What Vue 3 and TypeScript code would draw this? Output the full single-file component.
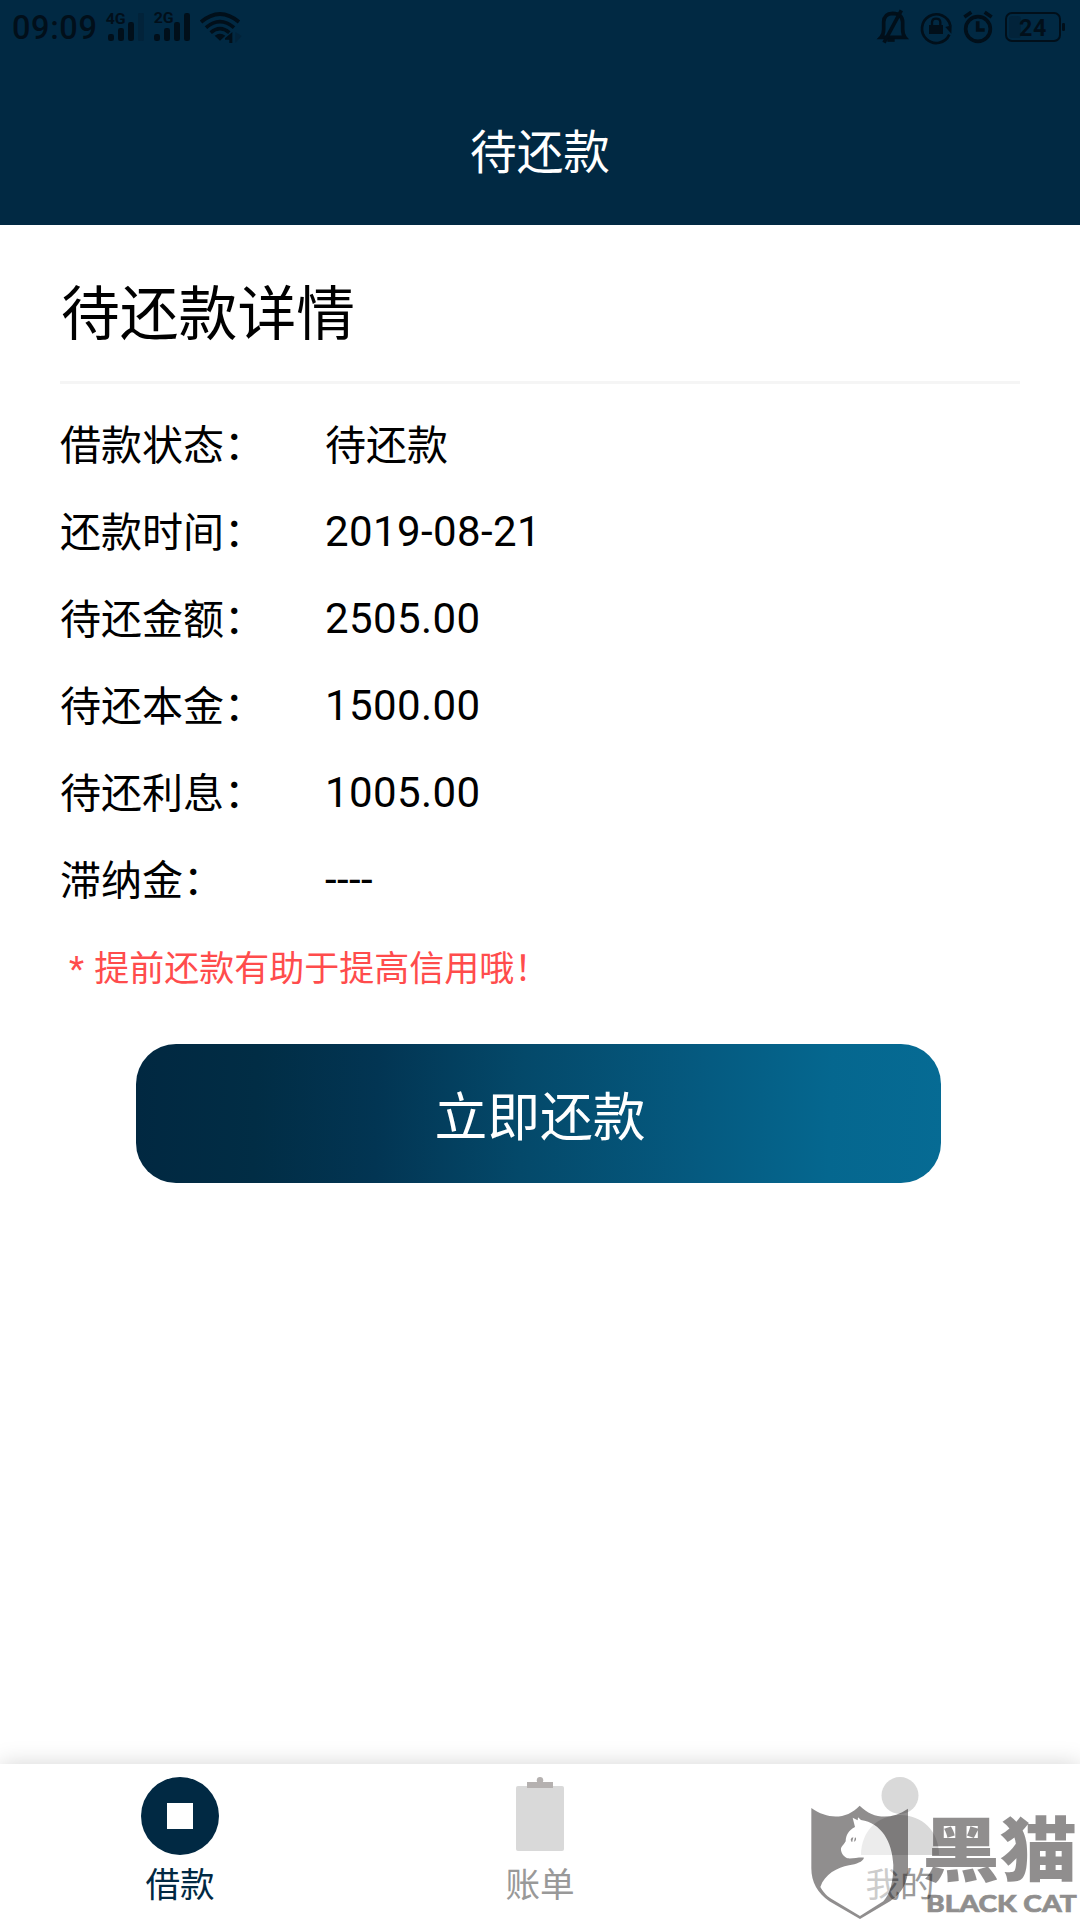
<script setup lang="ts">
import { ref } from 'vue'

interface Item {
  label: string
  value: string
}

interface Tab {
  id: string
  nome: string
}

const detalhes: Item[] = [
  { label: '借款状态：', value: '待还款' },
  { label: '还款时间：', value: '2019-08-21' },
  { label: '待还金额：', value: '2505.00' },
  { label: '待还本金：', value: '1500.00' },
  { label: '待还利息：', value: '1005.00' },
  { label: '滞纳金：', value: '----' }
]

const tabs: Tab[] = [
  { id: 'loan', nome: '借款' },
  { id: 'bill', nome: '账单' },
  { id: 'mine', nome: '我的' }
]

const ativa = ref('loan')
</script>

<template>

<div class="page">

    <header class="header">

        <div class="status">

            <span class="hora">09:09</span>

            <svg class="sinais" width="170" height="60" viewBox="300 0 510 180">
                <g fill="#010f1a">
                    <text x="317" y="71" font-size="45" font-weight="700" textLength="60" lengthAdjust="spacingAndGlyphs">4G</text>
                    <rect x="324" y="102" width="18" height="21" rx="7" />
                    <rect x="354" y="84" width="18" height="39" rx="7" />
                    <rect x="384" y="66" width="18" height="57" rx="7" />
                    <rect x="414" y="39" width="18" height="84" rx="4" fill="#02233a" />
                    <text x="461" y="69" font-size="45" font-weight="700" textLength="60" lengthAdjust="spacingAndGlyphs">2G</text>
                    <rect x="462" y="102" width="18" height="21" rx="7" />
                    <rect x="492" y="84" width="18" height="39" rx="7" />
                    <rect x="522" y="66" width="18" height="57" rx="7" />
                    <rect x="552" y="39" width="18" height="84" rx="7" />
                    <path d="M660 122 L644 107 Q660 95 676 107 Z" />
                    <path d="M675 115 L697 96 V129 H688 V119 H675 Z" />
                </g>
                <g fill="none" stroke="#010f1a" stroke-width="11">
                    <path d="M603 66 Q660 18 717 66" />
                    <path d="M618 83 Q660 47 702 83" />
                    <path d="M632 98 Q660 74 688 98" />
                </g>
                <path d="M706 96 L725 108 L706 129 Z" fill="#02233a" />
            </svg>

            <svg class="avisos" width="220" height="60" viewBox="0 0 660 180">
                <g fill="none" stroke="#010f1a" stroke-width="11">
                    <path d="M63 112 H135 Q128 104 128 88 V66 Q127 41 98 40 Q72 41 71 66 V88 Q71 104 63 112 Z" />
                    <path d="M124 31 L72 128" />
                    <path d="M82 121 H104" stroke-width="9" />
                    <path d="M268 104 A43 43 0 1 1 271 77" stroke-width="8" />
                    <path d="M216 76 V66 Q217 56 228 56 Q240 56 241 66 V76" stroke-width="7" />
                    <circle cx="354" cy="87" r="37" stroke-width="11" />
                    <path d="M353 64 V90 H374" />
                    <path d="M313 51 L334 37 M374 37 L395 51" />
                    <rect x="438" y="39" width="162" height="84" rx="18" stroke-width="6" />
                </g>
                <path d="M256 81 L275 76 L274 101 Z" fill="#010f1a" />
                <rect x="207" y="75" width="42" height="27" fill="#010f1a" />
                <rect x="447" y="48" width="36" height="66" rx="10" fill="#02233a" />
                <rect x="606" y="69" width="9" height="24" rx="4" fill="#010f1a" />
                <text x="477" y="107" font-size="70" font-weight="700" fill="#010f1a" textLength="82">24</text>
            </svg>

        </div>

        <h1>待还款</h1>

    </header>

    <main class="conteudo">

        <h2>待还款详情</h2>

        <dl>

            <div
                v-for="item in detalhes"
                :key="item.label"
                class="linha"
            >
                <dt>{{ item.label }}</dt>
                <dd>{{ item.value }}</dd>
            </div>

        </dl>

        <p class="dica">* 提前还款有助于提高信用哦！</p>

        <button class="btnPagar">立即还款</button>

    </main>

    <nav class="tabs">

        <div
            v-for="tab in tabs"
            :key="tab.id"
            class="tab"
            :class="{ ativa: ativa === tab.id }"
            @click="ativa = tab.id"
        >

            <svg width="78" height="78" viewBox="0 0 78 78">
                <template v-if="tab.id === 'loan'">
                    <circle cx="39" cy="39" r="39" fill="#012943" />
                    <rect x="26" y="26" width="26" height="26" fill="#fff" />
                </template>
                <template v-else-if="tab.id === 'bill'">
                    <rect x="15" y="9" width="48" height="65" rx="2" fill="#d9d9d9" />
                    <rect x="26" y="5" width="26" height="6" fill="#b5b1b0" />
                    <circle cx="39" cy="3.2" r="3.2" fill="#b5b1b0" />
                </template>
                <template v-else>
                    <circle cx="39" cy="18.5" r="18.5" fill="#d9d9d9" />
                    <path d="M0 78 C0 54 17 38 39 38 S78 54 78 78 Z" fill="#d9d9d9" />
                </template>
            </svg>

            <span>{{ tab.nome }}</span>

        </div>

    </nav>

    <!-- logo translúcido por cima da barra -->
    <svg class="marca" width="300" height="180" viewBox="0 0 900 540">
        <path
            d="M94 204 C145 240 200 238 239 197 C280 238 334 240 384 206 V385 C384 425 367 460 330 484 L240 537 L148 484 C112 460 94 425 94 385 Z"
            fill="#231f20"
        />
        <path
            d="M121 441 C132 460 143 471 160 480 L240 528 L310 484 C330 462 340 425 340 375 C337 305 304 249 243 240 L234 232 L233 241 L218 233 L225 261 C206 271 198 284 197 304 C191 315 185 318 183 325 C181 337 192 352 203 355 C220 356 235 352 252 353 C248 366 230 371 207 376 C172 383 134 402 121 441 Z"
            fill="#fff"
        />
        <path d="M212 299 Q214 289 228 293 Q230 306 215 306 Z" fill="#231f20" />
        <path d="M223 290 L219 306" stroke="#fff" stroke-width="5" />
        <text class="marcaNome" x="0" y="0" transform="translate(427 409) scale(1.02 .93)" font-size="228" textLength="456" fill="#231f20">黑猫</text>
        <text class="marcaSub" x="438" y="517" font-size="68" textLength="452" lengthAdjust="spacingAndGlyphs" fill="#231f20" stroke="#231f20" stroke-width="2">BLACK CAT</text>
    </svg>

</div>

</template>

<style>

body{

    margin:0;

    background:white;

}

</style>

<style scoped>

.page{

    position:relative;

    display:flex;

    flex-direction:column;

    width:1080px;

    height:1920px;

    overflow:hidden;

    background:white;

    color:black;

    font-family:Roboto, "Noto Sans CJK SC", sans-serif;

}

.header{

    height:225px;

    background:#012943;

}

.status{

    display:flex;

    height:60px;

    color:#010f1a;

}

.hora{

    width:88px;

    padding-left:12px;

    font-size:32.5px;

    font-weight:500;

    line-height:57px;

    letter-spacing:.6px;

}

.avisos{

    margin-left:auto;

}

h1{

    margin:0;

    padding-top:18px;

    color:white;

    font-size:46.6px;

    font-weight:400;

    line-height:150px;

    text-align:center;

}

.conteudo{

    flex:1;

    padding:0 60px;

}

h2{

    margin:0;

    height:156px;

    padding-left:1px;

    border-bottom:3px solid #f5f5f5;

    font-size:58.8px;

    font-weight:400;

    line-height:180px;

}

dl{

    margin:0;

    padding-top:17px;

}

.linha{

    display:flex;

    height:87px;

    line-height:87px;

}

dt{

    width:265px;

    font-size:41px;

    line-height:90px;

}

dd{

    margin:0;

    font-size:42px;

    letter-spacing:.4px;

}

.linha:first-child dd{

    font-size:41px;

    line-height:90px;

    letter-spacing:0;

}

.dica{

    margin:0;

    height:90px;

    padding-left:9px;

    color:#ff4c4c;

    font-size:35px;

    line-height:94px;

    word-spacing:1.5px;

}

.btnPagar{

    display:block;

    width:805px;

    height:139px;

    margin:31px 0 0 76px;

    padding:10px 0 0 3px;

    border:none;

    border-radius:40px;

    background:linear-gradient(92deg, #012841 0%, #012d45 15%, #023553 30%, #04496a 48%, #055a80 70%, #05678f 86%, #066b94 100%);

    color:white;

    font-family:inherit;

    font-size:52.8px;

    line-height:129px;

}

.tabs{

    display:flex;

    height:156px;

    background:white;

    box-shadow:0 0 22px rgba(0,0,0,.17);

}

.tab{

    flex:1;

    display:flex;

    flex-direction:column;

    align-items:center;

    padding-top:13px;

    color:#999;

    font-size:34.6px;

    line-height:60px;

}

.tab.ativa{

    color:#012943;

}

.marca{

    position:absolute;

    right:0;

    bottom:0;

    opacity:.5;

}

.marcaNome{

    font-family:"Noto Sans CJK SC", sans-serif;

    font-weight:900;

}

.marcaSub{

    font-family:Lato, sans-serif;

    font-weight:900;

}

</style>
